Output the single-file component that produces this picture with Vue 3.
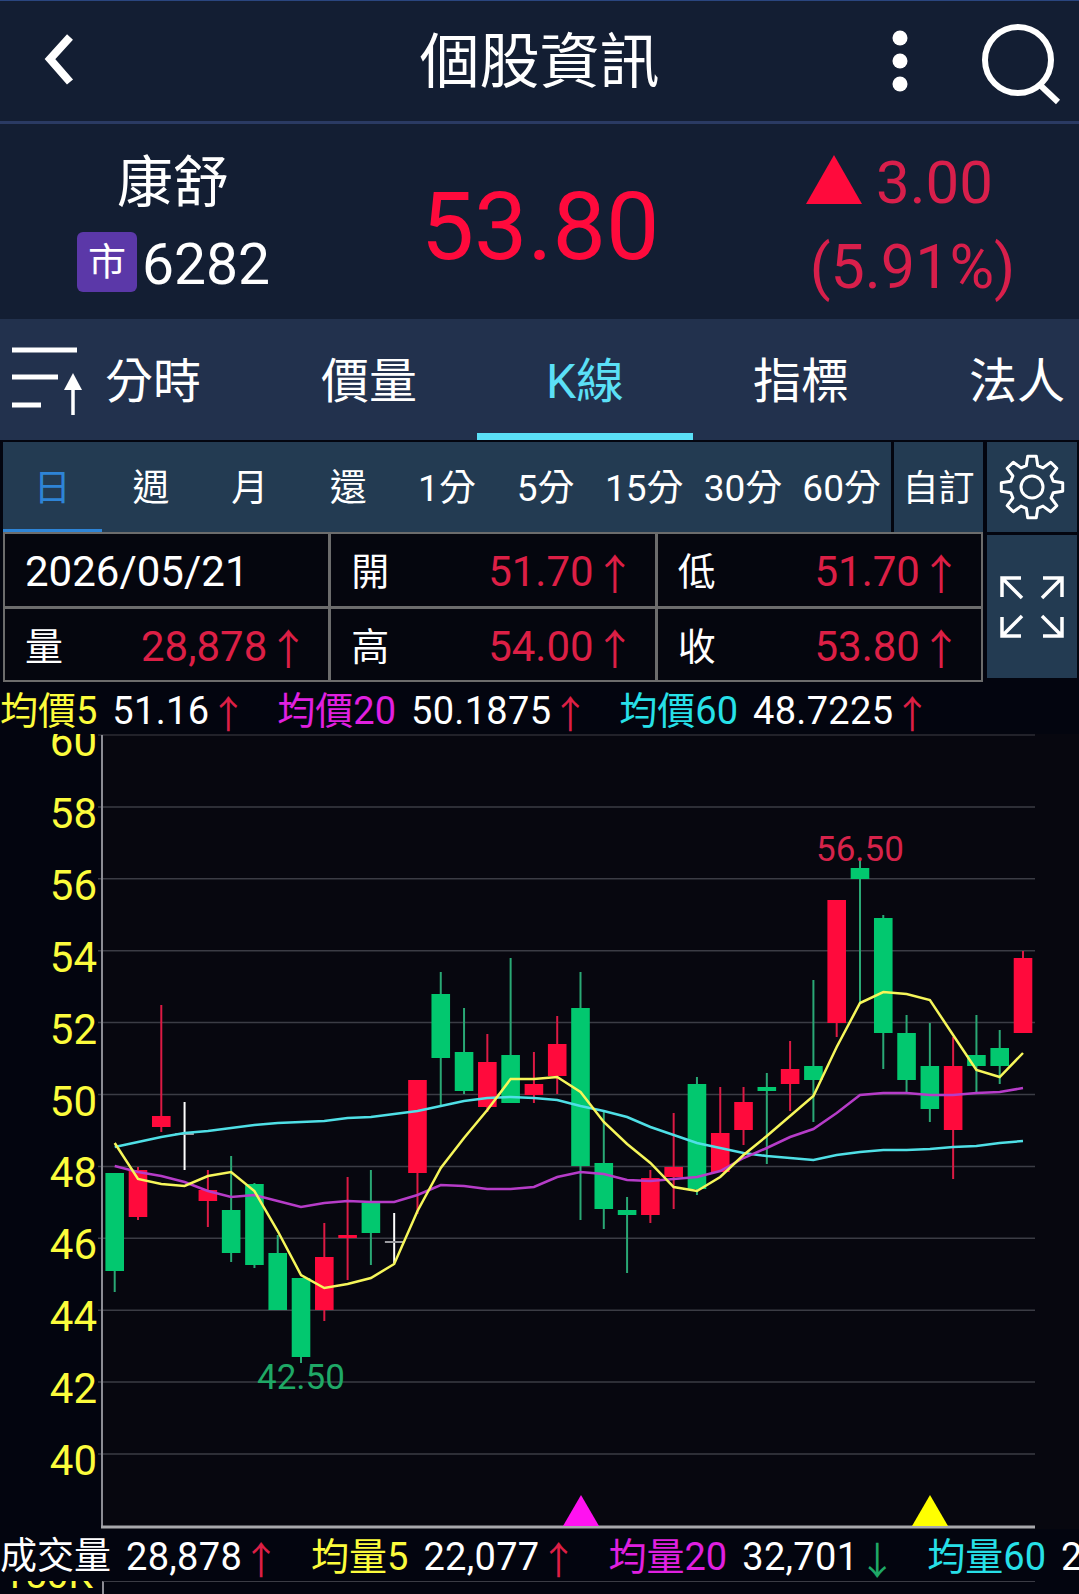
<template>
  <div class="page">
    <header class="topbar">
      <svg class="back" width="40" height="56" viewBox="0 0 40 56">
        <path d="M30 5 L10 27 L30 50" fill="none" stroke="#fff" stroke-width="8" />
      </svg>
      <h1 class="title">個股資訊</h1>
      <svg class="more" width="20" height="70" viewBox="0 0 20 70">
        <circle cx="10" cy="11" r="7.5" fill="#fff" />
        <circle cx="10" cy="34" r="7.5" fill="#fff" />
        <circle cx="10" cy="57" r="7.5" fill="#fff" />
      </svg>
      <svg class="search" width="86" height="86" viewBox="0 0 86 86">
        <circle cx="38" cy="38" r="33" fill="none" stroke="#fff" stroke-width="6" />
        <path d="M60 63 L78 80" fill="none" stroke="#fff" stroke-width="6" />
      </svg>
    </header>

    <section class="stock">
      <div class="stock-name">
        <div class="name">康舒</div>
        <div class="code">
          <span class="badge">市</span>
          <span class="code-num">6282</span>
        </div>
      </div>
      <div class="price">53.80</div>
      <div class="change">
        <div class="delta">
          <svg width="56" height="49" viewBox="0 0 56 49"><path d="M28 0 L56 49 H0 Z" fill="#ff0a3c" /></svg>
          <span>3.00</span>
        </div>
        <div class="percent">(5.91%)</div>
      </div>
    </section>

    <nav class="tabs">
      <svg class="sort-icon" width="78" height="72" viewBox="0 0 78 72">
        <path d="M0 3 H65 M0 30 H46 M0 58 H29" stroke="#fff" stroke-width="5" fill="none" />
        <path d="M61 68 V36" stroke="#fff" stroke-width="3.5" fill="none" />
        <path d="M61 26 L70 43 H52 Z" fill="#fff" />
      </svg>
      <div
        v-for="tab in tabs"
        :key="tab"
        class="tab"
        :class="{ active: tab === 'K線' }"
      >
        {{ tab }}
      </div>
    </nav>

    <section class="controls">
      <div class="controls-left">
        <div class="periods">
          <div class="period-list">
            <div
              v-for="(p, index) in periods"
              :key="p"
              class="period"
              :class="{ active: index === 0 }"
            >
              {{ p }}
            </div>
          </div>
          <div class="custom">自訂</div>
        </div>
        <div class="quote-table">
          <div v-for="cell in quotes" :key="cell.label" class="quote-cell">
            <span class="quote-label">{{ cell.label }}</span>
            <span v-if="cell.value" class="quote-value">{{ cell.value }}<i class="arrow">↑</i></span>
          </div>
        </div>
      </div>
      <div class="controls-right">
        <div class="side-btn gear">
          <svg width="66" height="66" viewBox="-33 -33 66 66">
            <polygon :points="gearPoints" fill="none" stroke="#fff" stroke-width="3" stroke-linejoin="round" />
            <circle r="11" fill="none" stroke="#fff" stroke-width="3" />
          </svg>
        </div>
        <div class="side-btn expand">
          <svg width="64" height="62" viewBox="0 0 64 62" fill="none" stroke="#fff" stroke-width="3.5">
            <path d="M2 21 V2 H21 M2 2 L22 22" />
            <path d="M62 21 V2 H43 M62 2 L42 22" />
            <path d="M2 41 V60 H21 M2 60 L22 40" />
            <path d="M62 41 V60 H43 M62 60 L42 40" />
          </svg>
        </div>
      </div>
    </section>

    <div class="legend price-legend">
      <span class="yellow">均價5</span>
      <span class="val">51.16</span><i class="arrow">↑</i>
      <span class="purple gap">均價20</span>
      <span class="val">50.1875</span><i class="arrow">↑</i>
      <span class="cyan gap">均價60</span>
      <span class="val">48.7225</span><i class="arrow">↑</i>
    </div>

    <svg class="chart" width="1079" height="795" viewBox="0 734 1079 795">
      <rect x="102" y="734" width="977" height="795" fill="#07070f" />
      <g v-for="(g, i) in grid" :key="g.label">
        <line x1="98" :x2="1035" :y1="g.y" :y2="g.y" :stroke="i === 0 ? '#2c2c35' : '#3b3c45'" stroke-width="1.5" />
        <text class="y-label" x="97" :y="g.y + 21" text-anchor="end">{{ g.label }}</text>
      </g>
      <line x1="102" x2="102" y1="735" y2="1528" stroke="#8c8c94" stroke-width="2" />
      <line x1="101" x2="1035" y1="1527" y2="1527" stroke="#a8a8ac" stroke-width="3" />

      <g v-for="c in candles" :key="c.x">
        <line :x1="c.x" :x2="c.x" :y1="c.top" :y2="c.bottom" :stroke="c.wick" stroke-width="2" />
        <rect v-if="c.body > 0" :x="c.x - 9.3" :y="c.open" width="18.6" :height="c.body" :fill="c.color" />
        <line v-else :x1="c.x - 9.3" :x2="c.x + 9.3" :y1="c.open" :y2="c.open" stroke="#9a9aa0" stroke-width="2" />
      </g>

      <polyline :points="line(ma60)" fill="none" stroke="#4fdfe6" stroke-width="2.5" />
      <polyline :points="line(ma20)" fill="none" stroke="#b63cc8" stroke-width="2.5" />
      <polyline :points="line(ma5)" fill="none" stroke="#f6f65a" stroke-width="2.5" />

      <text class="peak red" x="860" y="861" text-anchor="middle">56.50</text>
      <text class="peak green" x="301" y="1389" text-anchor="middle">42.50</text>

      <path d="M581 1495 L599 1526 H563 Z" fill="#ff12f0" />
      <path d="M930 1495 L948 1526 H912 Z" fill="#ffff00" />
    </svg>

    <div class="legend vol-legend">
      <span class="total">成交量</span>
      <span class="val">28,878</span><i class="arrow">↑</i>
      <span class="yellow gap">均量5</span>
      <span class="val">22,077</span><i class="arrow">↑</i>
      <span class="purple gap">均量20</span>
      <span class="val">32,701</span><i class="arrow down">↓</i>
      <span class="cyan gap">均量60</span>
      <span class="val">2</span>
    </div>

    <div class="sub-chart">
      <div class="sub-grid"></div>
      <span class="sub-label">150K</span>
    </div>
  </div>
</template>

<script setup>
const tabs = ['分時', '價量', 'K線', '指標', '法人']
const periods = ['日', '週', '月', '還', '1分', '5分', '15分', '30分', '60分']

const quotes = [
  { label: '2026/05/21' },
  { label: '開', value: '51.70' },
  { label: '低', value: '51.70' },
  { label: '量', value: '28,878' },
  { label: '高', value: '54.00' },
  { label: '收', value: '53.80' }
]

const gearPoints = (() => {
  const pts = []
  for (let i = 0; i < 8; i++) {
    const base = i * 45 - 90
    for (const [r, a] of [[22, -15], [31, -8], [31, 8], [22, 15]]) {
      const t = ((base + a) * Math.PI) / 180
      pts.push((r * Math.cos(t)).toFixed(1) + ',' + (r * Math.sin(t)).toFixed(1))
    }
  }
  return pts.join(' ')
})()

const grid = [60, 58, 56, 54, 52, 50, 48, 46, 44, 42, 40].map((p, i) => ({
  label: String(p),
  y: 735 + i * 71.9
}))

const slot = (i) => 114.7 + i * 23.29

// r / g / w, wick top, body top, body bottom, wick bottom (page y)
const raw = [
  ['g', 1173, 1173, 1271, 1292],
  ['r', 1167, 1170, 1217, 1220],
  ['r', 1005, 1116, 1127, 1132],
  ['w', 1102, 1134, 1134, 1170],
  ['r', 1170, 1190, 1201, 1227],
  ['g', 1156, 1210, 1253, 1262],
  ['g', 1183, 1184, 1265, 1268],
  ['g', 1235, 1253, 1310, 1310],
  ['g', 1278, 1278, 1357, 1363],
  ['r', 1223, 1257, 1310, 1321],
  ['r', 1177, 1235, 1238, 1280],
  ['g', 1170, 1203, 1233, 1265],
  ['w', 1213, 1242, 1242, 1263],
  ['r', 1080, 1080, 1173, 1214],
  ['g', 972, 994, 1058, 1105],
  ['g', 1008, 1052, 1091, 1094],
  ['r', 1034, 1062, 1107, 1112],
  ['g', 958, 1055, 1103, 1103],
  ['r', 1052, 1084, 1095, 1103],
  ['r', 1016, 1044, 1076, 1094],
  ['g', 972, 1008, 1166, 1220],
  ['g', 1110, 1163, 1209, 1229],
  ['g', 1197, 1210, 1215, 1273],
  ['r', 1170, 1178, 1215, 1223],
  ['r', 1113, 1167, 1177, 1209],
  ['g', 1077, 1084, 1189, 1195],
  ['r', 1087, 1133, 1172, 1172],
  ['r', 1087, 1102, 1130, 1145],
  ['g', 1073, 1087, 1091, 1164],
  ['r', 1041, 1069, 1084, 1111],
  ['g', 980, 1066, 1080, 1122],
  ['r', 900, 900, 1023, 1037],
  ['g', 859, 868, 879, 1003],
  ['g', 915, 918, 1033, 1069],
  ['g', 1015, 1033, 1080, 1093],
  ['g', 1023, 1066, 1109, 1122],
  ['r', 1037, 1066, 1130, 1179],
  ['g', 1015, 1055, 1066, 1093],
  ['g', 1030, 1048, 1066, 1084],
  ['r', 951, 958, 1033, 1033]
]

const colors = {
  r: { color: '#ff0a3c', wick: '#dc1a44' },
  g: { color: '#02c86f', wick: '#2aa875' },
  w: { color: '#fff', wick: '#fff' }
}

const candles = raw.map(([kind, top, open, close, bottom], i) => ({
  x: slot(i),
  top,
  open,
  body: close - open,
  bottom,
  ...colors[kind]
}))

const ma5 = [1143, 1179, 1184, 1186, 1176, 1172, 1191, 1231, 1275, 1288, 1284, 1278, 1264, 1211, 1168, 1138, 1110, 1079, 1079, 1077, 1092, 1122, 1144, 1163, 1187, 1191, 1177, 1155, 1136, 1116, 1096, 1047, 1003, 992, 994, 1000, 1035, 1070, 1077, 1053]
const ma20 = [1166, 1172, 1176, 1182, 1191, 1197, 1195, 1201, 1207, 1203, 1201, 1202, 1202, 1195, 1185, 1186, 1189, 1189, 1187, 1177, 1172, 1174, 1180, 1181, 1179, 1177, 1171, 1158, 1148, 1137, 1129, 1113, 1095, 1093, 1093, 1095, 1095, 1093, 1092, 1088]
const ma60 = [1147, 1142, 1137, 1133, 1131, 1128, 1125, 1123, 1122, 1121, 1118, 1117, 1114, 1111, 1106, 1101, 1098, 1097, 1098, 1100, 1106, 1111, 1117, 1127, 1135, 1143, 1148, 1153, 1156, 1158, 1160, 1155, 1152, 1150, 1150, 1149, 1147, 1146, 1143, 1141]

const line = (ys) => ys.map((y, i) => slot(i).toFixed(1) + ',' + y).join(' ')
</script>

<style>
html,
body {
  margin: 0;
  background: #05060f;
}
</style>

<style scoped>
.page {
  width: 1079px;
  height: 1594px;
  overflow: hidden;
  background: #03050f;
  color: #fff;
  font-family: Roboto, "Noto Sans CJK TC", sans-serif;
}

.topbar {
  position: relative;
  box-sizing: border-box;
  height: 124px;
  padding-top: 3px;
  border-top: 1px solid #2a4680;
  border-bottom: 3px solid #2a3a63;
  background: #131e33;
  display: flex;
  align-items: center;
  justify-content: center;
}
.title {
  margin: 0;
  font-size: 60px;
  font-weight: 400;
  line-height: 1;
}
.back {
  position: absolute;
  left: 40px;
  top: 31px;
}
.more {
  position: absolute;
  left: 890px;
  top: 26px;
}
.search {
  position: absolute;
  left: 980px;
  top: 21px;
}

.stock {
  height: 195px;
  background: #131e33;
  display: grid;
  grid-template-columns: 346px 388px 1fr;
  align-items: center;
}
.stock-name {
  display: flex;
  flex-direction: column;
  align-items: center;
}
.name {
  font-size: 56px;
  line-height: 64px;
  margin: 3px 0 14px;
}
.code {
  display: flex;
  align-items: center;
  gap: 5px;
  font-size: 57px;
  line-height: 60px;
  padding-left: 1px;
}
.code-num {
  padding-top: 6px;
}
.badge {
  width: 60px;
  height: 60px;
  background: #5b38a8;
  border-radius: 6px;
  font-size: 38px;
  display: flex;
  align-items: center;
  justify-content: center;
}
.price {
  font-size: 95px;
  color: #ff0a3c;
  line-height: 1;
  text-align: center;
  margin-top: 10px;
}
.change {
  color: #d81f4b;
  font-size: 60px;
  line-height: 66px;
  padding: 6px 0 0 12px;
  display: flex;
  flex-direction: column;
  align-items: center;
}
.delta {
  display: flex;
  align-items: center;
  gap: 14px;
  margin: 0 26px 18px 0;
}
.delta svg {
  margin-top: -6px;
}
.percent {
  font-size: 61px;
}

.tabs {
  position: relative;
  height: 121px;
  box-sizing: border-box;
  padding-left: 45px;
  background: #22314d;
  display: flex;
  overflow: hidden;
}
.tab {
  flex: 0 0 216px;
  box-sizing: border-box;
  text-align: center;
  font-size: 48px;
  line-height: 126px;
  height: 121px;
  border-bottom: 7px solid transparent;
}
.tab.active {
  color: #5be0f7;
  border-bottom-color: #5be0f7;
}
.sort-icon {
  position: absolute;
  left: 12px;
  top: 28px;
}

.controls {
  display: flex;
  gap: 4px;
  padding: 2px 2px 0 3px;
  height: 242px;
  box-sizing: border-box;
}
.controls-left {
  width: 980px;
}
.periods {
  display: flex;
  gap: 3px;
  height: 90px;
}
.period-list {
  display: grid;
  grid-template-columns: repeat(9, 1fr);
  width: 888px;
  background: #233b52;
}
.period {
  box-sizing: border-box;
  height: 90px;
  border-bottom: 3px solid transparent;
  text-align: center;
  font-size: 37px;
  line-height: 94px;
}
.period.active {
  color: #2e84d6;
  border-bottom-color: #2e84d6;
}
.custom {
  flex: 1;
  background: #233b52;
  text-align: center;
  font-size: 36px;
  line-height: 94px;
}
.quote-table {
  display: grid;
  grid-template-columns: repeat(3, 1fr);
  gap: 3px;
  padding: 2px;
  height: 150px;
  box-sizing: border-box;
  background: #6c6c6c;
}
.quote-cell {
  background: #05060e;
  display: flex;
  align-items: center;
  justify-content: space-between;
  padding: 5px 19px 0 20px;
  font-size: 38px;
  line-height: 1;
}
.quote-cell:first-child .quote-label {
  font-size: 42px;
}
.quote-value {
  color: #dc1f45;
  font-size: 42px;
  display: flex;
  align-items: center;
}
.arrow {
  font-style: normal;
  font-family: "Noto Sans CJK TC", sans-serif;
  font-weight: 400;
  color: #dc1f45;
}

.controls-right {
  width: 90px;
  display: flex;
  flex-direction: column;
  gap: 3px;
}
.side-btn {
  background: #233b52;
  display: flex;
  align-items: center;
  justify-content: center;
}
.gear {
  height: 90px;
}
.expand {
  height: 143px;
}

.legend {
  display: flex;
  align-items: center;
  white-space: nowrap;
  font-size: 38px;
  line-height: 1.2;
}
.price-legend {
  height: 52px;
  padding-top: 8px;
  box-sizing: border-box;
}
.vol-legend {
  height: 52px;
  padding-top: 5px;
  box-sizing: border-box;
}
.total {
  font-size: 37px;
}
.yellow {
  color: #fcfc3c;
}
.purple {
  color: #e020e0;
}
.cyan {
  color: #27e0e8;
}
.val {
  color: #fff;
  margin-left: 15px;
  letter-spacing: 0.3px;
}
.gap {
  margin-left: 30px;
}
.vol-legend .gap {
  margin-left: 31px;
}
.legend .arrow.down {
  color: #1fa866;
}

.chart {
  display: block;
}
.y-label {
  fill: #fcfc3c;
  font-size: 42px;
}
.peak {
  font-size: 35px;
}
.peak.red {
  fill: #d6234a;
}
.peak.green {
  fill: #1fa866;
}

.sub-chart {
  position: relative;
  height: 13px;
  overflow: hidden;
}
.sub-grid {
  height: 13px;
  margin-left: 102px;
  width: 933px;
  box-sizing: border-box;
  border-top: 1.5px solid #3b3c45;
  border-left: 2px solid #8c8c94;
}
.sub-label {
  position: absolute;
  right: 986px;
  bottom: -1px;
  color: #fcfc3c;
  font-size: 39px;
  line-height: 1;
  white-space: nowrap;
}
</style>
